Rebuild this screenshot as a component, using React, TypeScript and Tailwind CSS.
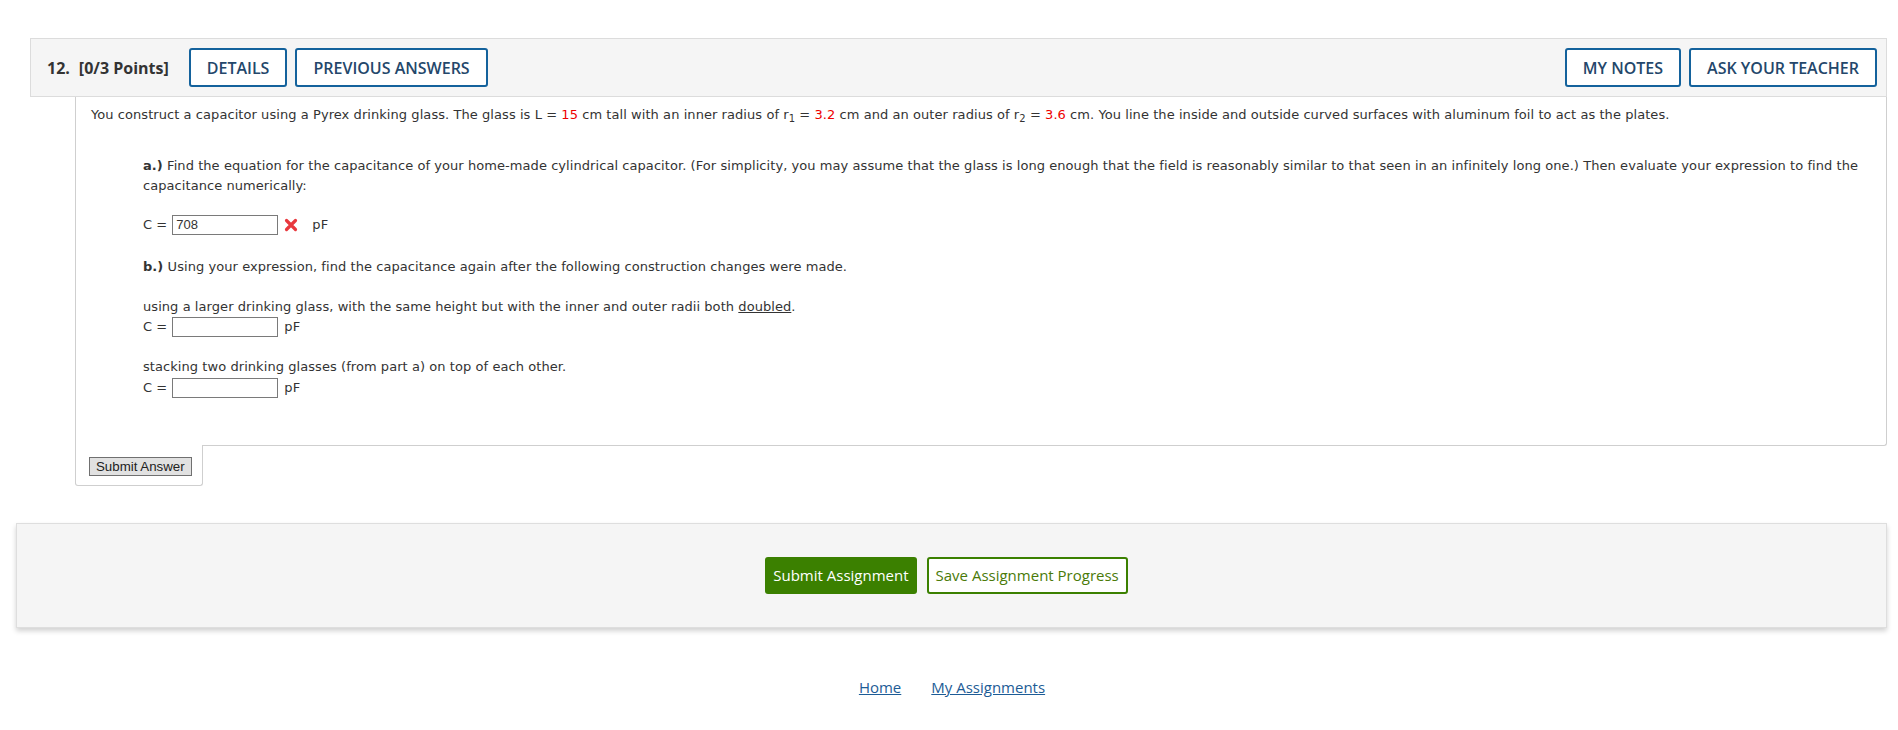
import React from "react";

// Question 12 card + assignment footer

const body = "font-['DejaVu_Sans',Verdana,sans-serif] text-[13px] leading-[20px] tracking-[0.065px] text-[#333]";

function WrongMark() {
  return (
    <svg className="mx-[6px] h-[14px] w-[14px]" viewBox="0 0 14 14">
      <path d="M2.5 2.5 L11.5 11.5 M11.5 2.5 L2.5 11.5" stroke="#e8383d" strokeWidth="3.2" strokeLinecap="round" />
    </svg>
  );
}

function AnswerBox({ value = "" }: { value?: string }) {
  return (
    <input
      className="h-[20px] w-[106px] border border-[#7a7a7a] bg-white px-[3px] font-['Liberation_Sans',Arial,sans-serif] text-[13px] tracking-normal text-[#333] outline-none"
      defaultValue={value}
      type="text"
    />
  );
}

function HeaderButton({ label }: { label: string }) {
  return (
    <button className="h-[39px] rounded-[3px] border-2 border-[#14629c] bg-white px-[16px] font-['Open_Sans',sans-serif] text-[16px] font-semibold text-[#24476b]">
      {label}
    </button>
  );
}

export default function App() {
  return (
    <div className="min-h-[730px] bg-white pt-[38px] pb-[20px]">
      {/* question header */}
      <div className="ml-[30px] mr-[11px] flex h-[59px] items-center border border-[#dcdcdc] bg-[#f5f5f5] pl-[16px] pr-[9px]">
        <div className="mr-[20px] font-['Open_Sans',sans-serif] text-[16px] font-bold text-[#333]">
          12.<span className="ml-[9px]">[0/3 Points]</span>
        </div>
        <div className="flex gap-[8px]">
          <HeaderButton label="DETAILS" />
          <HeaderButton label="PREVIOUS ANSWERS" />
        </div>
        <div className="ml-auto flex gap-[8px]">
          <HeaderButton label="MY NOTES" />
          <HeaderButton label="ASK YOUR TEACHER" />
        </div>
      </div>

      {/* question body */}
      <div className="ml-[75px] mr-[11px]">
        <div className={`rounded-br-[3px] border-x border-b border-[#cfcfcf] pl-[15px] pr-[15px] pt-[8px] pb-[47px] ${body}`}>
          <p>
            You construct a capacitor using a Pyrex drinking glass. The glass is L ={" "}
            <span className="text-[#e00]">15</span> cm tall with an inner radius of r
            <sub className="text-[10px]">1</sub> = <span className="text-[#e00]">3.2</span> cm and an outer
            radius of r<sub className="text-[10px]">2</sub> = <span className="text-[#e00]">3.6</span> cm. You
            line the inside and outside curved surfaces with aluminum foil to act as the plates.
          </p>

          <div className="ml-[52px] mt-[31px]">
            <p>
              <b>a.)</b> Find the equation for the capacitance of your home-made cylindrical capacitor. (For
              simplicity, you may assume that the glass is long enough that the field is reasonably similar to
              that seen in an infinitely long one.) Then evaluate your expression to find the capacitance
              numerically:
            </p>
            <div className="mt-[19px] flex h-[20px] items-center">
              <span className="mr-[5px]">C =</span>
              <AnswerBox value="708" />
              <WrongMark />
              <span className="ml-[8px]">pF</span>
            </div>

            <p className="mt-[22px]">
              <b>b.)</b> Using your expression, find the capacitance again after the following construction
              changes were made.
            </p>

            <p className="mt-[20px]">
              using a larger drinking glass, with the same height but with the inner and outer radii both{" "}
              <u>doubled</u>.
            </p>
            <div className="flex h-[20px] items-center">
              <span className="mr-[5px]">C =</span>
              <AnswerBox />
              <span className="ml-[6px]">pF</span>
            </div>

            <p className="mt-[20px]">stacking two drinking glasses (from part a) on top of each other.</p>
            <div className="mt-px flex h-[20px] items-center">
              <span className="mr-[5px]">C =</span>
              <AnswerBox />
              <span className="ml-[6px]">pF</span>
            </div>
          </div>
        </div>

        <div className="-mt-px flex h-[41px] w-[128px] items-start rounded-b-[3px] border-x border-b border-[#cfcfcf] bg-white pl-[13px] pt-[12px]">
          <button className="h-[19px] border border-[#707070] bg-[#e1e1e1] px-[6px] font-['Liberation_Sans',Arial,sans-serif] text-[13.3px] leading-[17px] text-[#222]">
            Submit Answer
          </button>
        </div>
      </div>

      {/* assignment actions */}
      <div className="ml-[16px] mr-[11px] mt-[37px] flex h-[105px] items-center justify-center border border-[#dedede] bg-[#f5f5f5] shadow-[0_3px_5px_rgba(0,0,0,0.18)]">
        <div className="flex gap-[10px] pr-[10px] font-['Open_Sans',sans-serif] text-[15px]">
          <button className="h-[37px] rounded-[3px] bg-[#3b8000] px-[8px] text-white">Submit Assignment</button>
          <button className="h-[37px] rounded-[3px] border-2 border-[#3b8000] bg-white px-[7px] text-[#4a7a08]">
            Save Assignment Progress
          </button>
        </div>
      </div>

      <div className="mt-[49px] flex justify-center gap-[30px] pl-[6px] font-['Open_Sans',sans-serif] text-[15px] leading-[20px]">
        <a className="text-[#1d5c96] underline" href="#">
          Home
        </a>
        <a className="text-[#1d5c96] underline" href="#">
          My Assignments
        </a>
      </div>
    </div>
  );
}
